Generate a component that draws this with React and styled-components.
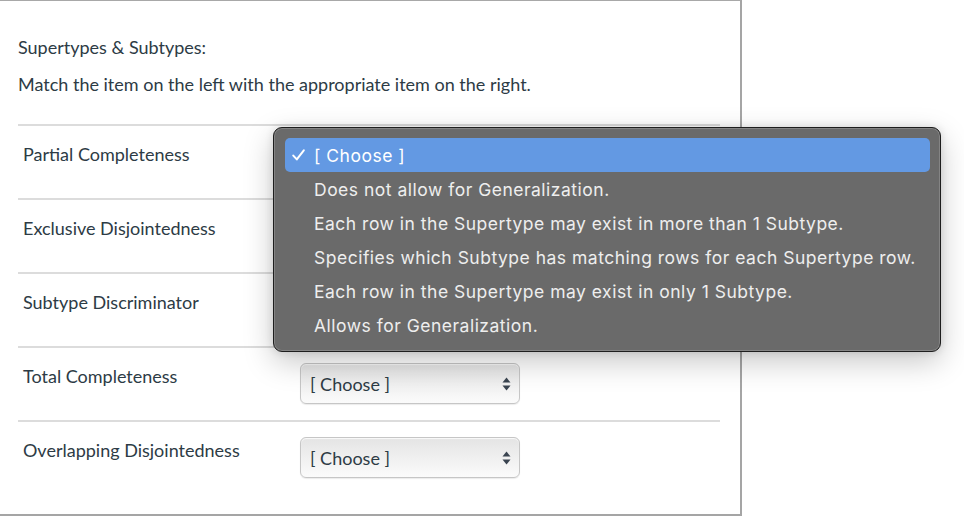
import React from "react";
import styled, { createGlobalStyle } from "styled-components";

const GlobalStyle = createGlobalStyle`
  html, body {
    margin: 0;
    padding: 0;
    background: #fff;
  }
  body {
    font-family: Lato, "Open Sans", sans-serif;
    color: #2d3b45;
  }
`;

const Page = styled.div`
  position: relative;
  width: 964px;
  height: 516px;
  overflow: hidden;
`;

const Panel = styled.div`
  box-sizing: border-box;
  width: 742px;
  height: 516px;
  border-top: 1px solid #a8a8a8;
  border-right: 2px solid #a5a5a5;
  border-bottom: 2px solid #a5a5a5;
  padding: 34px 20px 0 18px;
`;

const Heading = styled.div`
  font-size: 18px;
  line-height: 24px;
`;

const Instructions = styled.p`
  margin: 13px 0 28px;
  font-size: 18px;
  line-height: 24px;
`;

const Row = styled.div`
  display: flex;
  align-items: flex-start;
  height: 72px;
  border-top: 2px solid #dcdcdc;
  padding-left: 5px;
`;

const Label = styled.div`
  width: 277px;
  padding-top: 16px;
  font-size: 18px;
  line-height: 24px;
`;

// selects under the open menu are hidden by it anyway
const Select = styled.div`
  box-sizing: border-box;
  width: 220px;
  height: 41px;
  margin-top: 15px;
  display: flex;
  align-items: center;
  justify-content: space-between;
  padding: 0 8px 0 9px;
  border: 1px solid #c6c6c6;
  border-radius: 6px;
  background: linear-gradient(#e4e4e4, #fbfbfb);
  box-shadow: inset 0 1px 1px rgba(255, 255, 255, 0.8),
    0 1px 1px rgba(0, 0, 0, 0.08);
  font-size: 18px;
  color: #2d3b45;
  visibility: ${(p) => (p.$covered ? "hidden" : "visible")};
`;

const Menu = styled.ul`
  position: absolute;
  left: 273px;
  top: 127px;
  box-sizing: border-box;
  width: 668px;
  height: 225px;
  margin: 0;
  padding: 10px 10px 0 11px;
  list-style: none;
  background: #6a6a6a;
  border: 1px solid #1e1e1e;
  border-radius: 9px;
  box-shadow: inset 0 0 0 1px rgba(255, 255, 255, 0.18),
    0 10px 30px rgba(0, 0, 0, 0.22), 0 0 8px rgba(0, 0, 0, 0.12);
  font-family: Inter, "Noto Sans", sans-serif;
`;

const Item = styled.li`
  display: flex;
  align-items: center;
  height: 34px;
  padding-left: 7px;
  border-radius: 5px;
  font-size: 17.5px;
  letter-spacing: 0.5px;
  color: ${(p) => (p.$active ? "#ffffff" : "#eeeeee")};
  background: ${(p) => (p.$active ? "#6399e3" : "transparent")};
`;

const Check = styled.span`
  width: 22px;
  display: flex;
  align-items: center;
`;

const Arrows = () => (
  <svg width="9" height="14" viewBox="0 0 9 14">
    <path d="M4.5 0.5 L8.5 5.5 H0.5 Z" fill="#3a4450" />
    <path d="M4.5 13.5 L8.5 8.5 H0.5 Z" fill="#3a4450" />
  </svg>
);

const CheckMark = () => (
  <svg width="13" height="12" viewBox="0 0 13 12">
    <path
      d="M1.3 6.6 L4.8 10.4 L11.8 1.4"
      fill="none"
      stroke="#fff"
      strokeWidth="2"
      strokeLinecap="round"
      strokeLinejoin="round"
    />
  </svg>
);

const rows = [
  "Partial Completeness",
  "Exclusive Disjointedness",
  "Subtype Discriminator",
  "Total Completeness",
  "Overlapping Disjointedness",
];

const options = [
  "[ Choose ]",
  "Does not allow for Generalization.",
  "Each row in the Supertype may exist in more than 1 Subtype.",
  "Specifies which Subtype has matching rows for each Supertype row.",
  "Each row in the Supertype may exist in only 1 Subtype.",
  "Allows for Generalization.",
];

export default function App() {
  return (
    <Page>
      <GlobalStyle />
      <Panel>
        <Heading>Supertypes &amp; Subtypes:</Heading>
        <Instructions>
          Match the item on the left with the appropriate item on the right.
        </Instructions>
        {rows.map((r, i) => (
          <Row key={r}>
            <Label>{r}</Label>
            <Select $covered={i < 3}>
              <span>[ Choose ]</span>
              <Arrows />
            </Select>
          </Row>
        ))}
      </Panel>
      <Menu>
        {options.map((o, i) => (
          <Item key={o} $active={i === 0}>
            <Check>{i === 0 && <CheckMark />}</Check>
            {o}
          </Item>
        ))}
      </Menu>
    </Page>
  );
}
